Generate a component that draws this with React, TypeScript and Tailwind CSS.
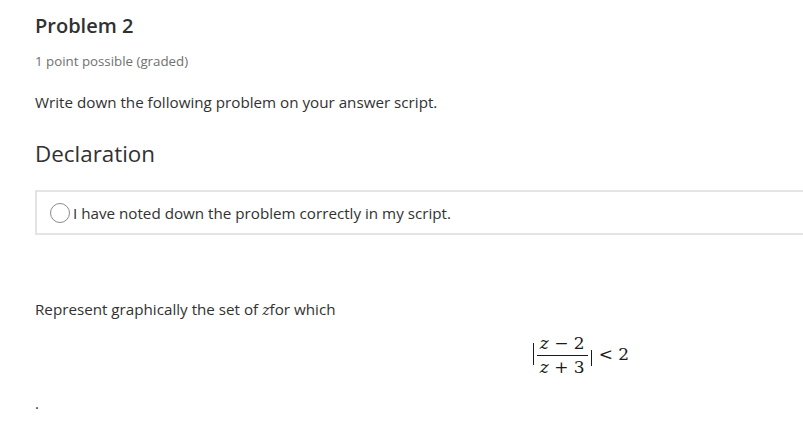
import React from 'react';

const App: React.FC = () => {
  return (
    <div className="min-h-[435px] w-[803px] overflow-hidden bg-white pl-[35px] text-[#313131] [font-family:'Open_Sans',sans-serif]">
      <h3 className="pt-[13px] text-[20px] leading-[26px] font-semibold">Problem 2</h3>
      <div className="mt-[13px] text-[13.3px] leading-[18px] text-[#707070]">1 point possible (graded)</div>

      <p className="mt-[22px] text-[15.2px] leading-[20px]">Write down the following problem on your answer script.</p>

      <h4 className="mt-[27px] text-[22.4px] leading-[30px]">Declaration</h4>

      {/* checkbox group */}
      <div className="mt-[21px] -mr-[10px] flex h-[45px] items-center border-2 border-[#e4e4e4] pl-[13px]">
        <span className="h-[20px] w-[20px] shrink-0 rounded-full border border-[#8a8a8a] bg-white" />
        <span className="ml-[3px] text-[15.2px] leading-[20px]">I have noted down the problem correctly in my script.</span>
      </div>

      <p className="mt-[64px] text-[15.2px] leading-[20px]">
        Represent graphically the set of{' '}
        <i className="[font-family:'DejaVu_Serif','Liberation_Serif',serif] text-[14px]">z</i>for which
      </p>

      {/* display math */}
      <div className="mt-[13px] flex justify-center pl-[324px] [font-family:'DejaVu_Serif','Liberation_Serif',serif] text-[17px] text-[#1a1a1a]">
        <div className="flex items-center">
          <span className="mt-[-2px] h-[22px] w-px bg-[#1a1a1a]" />
          <span className="mx-[3px] flex flex-col items-center leading-[20px]">
            <span className="px-[3px] pb-[2px]">
              <i>z</i> − 2
            </span>
            <span className="h-px w-full bg-[#1a1a1a]" />
            <span className="px-[3px] pt-[1px]">
              <i>z</i> + 3
            </span>
          </span>
          <span className="mt-[6px] h-[16px] w-px bg-[#1a1a1a]" />
          <span className="ml-[7px]">&lt; 2</span>
        </div>
      </div>

      <div className="mt-[16px] text-[15px] leading-[20px]">.</div>
    </div>
  );
};

export default App;
